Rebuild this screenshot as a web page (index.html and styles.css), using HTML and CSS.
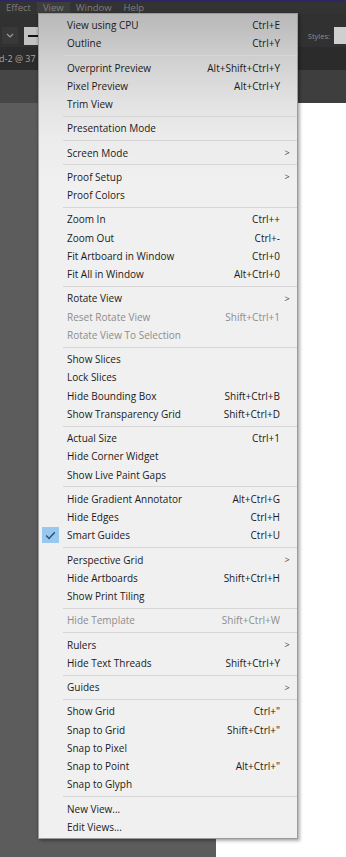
FILE: index.html
```html
<!DOCTYPE html>
<html>
<head>
<meta charset="utf-8">
<link rel="stylesheet" href="styles.css">
</head>
<body>
<div class="app">
  <div class="topline"></div>
  <div class="menubar">
    <span class="mb-item">Effect</span>
    <span class="mb-item active">View</span>
    <span class="mb-item">Window</span>
    <span class="mb-item">Help</span>
  </div>
  <div class="toolbar">
    <div class="tb-left">
      <span class="chev-box"><svg width="8" height="5" viewBox="0 0 8 5"><path d="M1 1l3 3 3-3" fill="none" stroke="#9a9a9a" stroke-width="1.2"/></svg></span>
      <span class="stroke-box"><span class="dash"></span></span>
    </div>
    <div class="tb-right">
      <span class="styles-label">Styles:</span>
      <span class="styles-box"></span>
    </div>
  </div>
  <div class="tabs"><span class="tab-text">d-2 @ 37</span></div>
  <div class="band"><div class="band-left"></div><div class="band-right"></div></div>
  <div class="workspace">
    <div class="pasteboard"></div>
    <div class="artboard"></div>
  </div>

  <div class="menu">
    <div class="row"><span class="lbl">View using CPU</span><span class="sc">Ctrl+E</span><span class="arr"></span></div>
    <div class="row"><span class="lbl">Outline</span><span class="sc">Ctrl+Y</span><span class="arr"></span></div>
    <div class="sep"></div>
    <div class="row"><span class="lbl">Overprint Preview</span><span class="sc">Alt+Shift+Ctrl+Y</span><span class="arr"></span></div>
    <div class="row"><span class="lbl">Pixel Preview</span><span class="sc">Alt+Ctrl+Y</span><span class="arr"></span></div>
    <div class="row"><span class="lbl">Trim View</span><span class="sc"></span><span class="arr"></span></div>
    <div class="sep"></div>
    <div class="row"><span class="lbl">Presentation Mode</span><span class="sc"></span><span class="arr"></span></div>
    <div class="sep"></div>
    <div class="row"><span class="lbl">Screen Mode</span><span class="sc"></span><span class="arr">&gt;</span></div>
    <div class="sep"></div>
    <div class="row"><span class="lbl">Proof Setup</span><span class="sc"></span><span class="arr">&gt;</span></div>
    <div class="row"><span class="lbl">Proof Colors</span><span class="sc"></span><span class="arr"></span></div>
    <div class="sep"></div>
    <div class="row"><span class="lbl">Zoom In</span><span class="sc">Ctrl++</span><span class="arr"></span></div>
    <div class="row"><span class="lbl">Zoom Out</span><span class="sc">Ctrl+-</span><span class="arr"></span></div>
    <div class="row"><span class="lbl">Fit Artboard in Window</span><span class="sc">Ctrl+0</span><span class="arr"></span></div>
    <div class="row"><span class="lbl">Fit All in Window</span><span class="sc">Alt+Ctrl+0</span><span class="arr"></span></div>
    <div class="sep"></div>
    <div class="row"><span class="lbl">Rotate View</span><span class="sc"></span><span class="arr">&gt;</span></div>
    <div class="row disabled"><span class="lbl">Reset Rotate View</span><span class="sc">Shift+Ctrl+1</span><span class="arr"></span></div>
    <div class="row disabled"><span class="lbl">Rotate View To Selection</span><span class="sc"></span><span class="arr"></span></div>
    <div class="sep"></div>
    <div class="row"><span class="lbl">Show Slices</span><span class="sc"></span><span class="arr"></span></div>
    <div class="row"><span class="lbl">Lock Slices</span><span class="sc"></span><span class="arr"></span></div>
    <div class="row"><span class="lbl">Hide Bounding Box</span><span class="sc">Shift+Ctrl+B</span><span class="arr"></span></div>
    <div class="row"><span class="lbl">Show Transparency Grid</span><span class="sc">Shift+Ctrl+D</span><span class="arr"></span></div>
    <div class="sep"></div>
    <div class="row"><span class="lbl">Actual Size</span><span class="sc">Ctrl+1</span><span class="arr"></span></div>
    <div class="row"><span class="lbl">Hide Corner Widget</span><span class="sc"></span><span class="arr"></span></div>
    <div class="row"><span class="lbl">Show Live Paint Gaps</span><span class="sc"></span><span class="arr"></span></div>
    <div class="sep"></div>
    <div class="row"><span class="lbl">Hide Gradient Annotator</span><span class="sc">Alt+Ctrl+G</span><span class="arr"></span></div>
    <div class="row"><span class="lbl">Hide Edges</span><span class="sc">Ctrl+H</span><span class="arr"></span></div>
    <div class="row checked"><span class="check"><svg width="11" height="9" viewBox="0 0 11 9"><path d="M1.2 4.6l2.8 2.9L9.8 1.2" fill="none" stroke="#2a4d73" stroke-width="1.4"/></svg></span><span class="lbl">Smart Guides</span><span class="sc">Ctrl+U</span><span class="arr"></span></div>
    <div class="sep"></div>
    <div class="row"><span class="lbl">Perspective Grid</span><span class="sc"></span><span class="arr">&gt;</span></div>
    <div class="row"><span class="lbl">Hide Artboards</span><span class="sc">Shift+Ctrl+H</span><span class="arr"></span></div>
    <div class="row"><span class="lbl">Show Print Tiling</span><span class="sc"></span><span class="arr"></span></div>
    <div class="sep"></div>
    <div class="row disabled"><span class="lbl">Hide Template</span><span class="sc">Shift+Ctrl+W</span><span class="arr"></span></div>
    <div class="sep"></div>
    <div class="row"><span class="lbl">Rulers</span><span class="sc"></span><span class="arr">&gt;</span></div>
    <div class="row"><span class="lbl">Hide Text Threads</span><span class="sc">Shift+Ctrl+Y</span><span class="arr"></span></div>
    <div class="sep"></div>
    <div class="row"><span class="lbl">Guides</span><span class="sc"></span><span class="arr">&gt;</span></div>
    <div class="sep"></div>
    <div class="row"><span class="lbl">Show Grid</span><span class="sc">Ctrl+"</span><span class="arr"></span></div>
    <div class="row"><span class="lbl">Snap to Grid</span><span class="sc">Shift+Ctrl+"</span><span class="arr"></span></div>
    <div class="row"><span class="lbl">Snap to Pixel</span><span class="sc"></span><span class="arr"></span></div>
    <div class="row"><span class="lbl">Snap to Point</span><span class="sc">Alt+Ctrl+"</span><span class="arr"></span></div>
    <div class="row"><span class="lbl">Snap to Glyph</span><span class="sc"></span><span class="arr"></span></div>
    <div class="sep"></div>
    <div class="row"><span class="lbl">New View...</span><span class="sc"></span><span class="arr"></span></div>
    <div class="row"><span class="lbl">Edit Views...</span><span class="sc"></span><span class="arr"></span></div>
  </div>
</div>
</body>
</html>
```

FILE: styles.css
```css
* { box-sizing: border-box; }
html, body { margin: 0; padding: 0; }
body { background: #5b5b5b; font-family: "Open Sans", "Noto Sans", "Liberation Sans", sans-serif; }
.app { position: relative; width: 346px; height: 857px; overflow: hidden; display: flex; flex-direction: column; background: #5b5b5b; }

.topline { height: 2px; background: #2d2762; flex: none; }
.menubar { height: 12px; background: #333333; display: flex; align-items: center; padding-left: 0; flex: none; }
.mb-item { font-size: 9.5px; color: #7f7f7f; line-height: 12px; padding: 0 6px; }
.mb-item.active { background: #3d3d3d; }

.toolbar { height: 33px; background: #313131; display: flex; justify-content: space-between; align-items: flex-start; padding-top: 13px; flex: none; }
.tb-left { display: flex; align-items: flex-start; gap: 6px; padding-left: 2px; }
.chev-box { width: 16px; height: 17px; background: #383838; display: flex; align-items: center; justify-content: center; }
.stroke-box { width: 14px; height: 18px; background: #c2c2c2; display: flex; align-items: center; justify-content: flex-end; }
.dash { width: 10px; height: 2px; background: #111; }
.tb-right { display: flex; align-items: center; gap: 4px; height: 17px; }
.styles-label { font-size: 7.5px; color: #8f8f8f; }
.styles-box { width: 12px; height: 17px; background: #cfcfcf; }

.tabs { height: 23px; background: #2b2b2b; display: flex; align-items: center; flex: none; }
.tab-text { font-size: 9px; color: #a4a4a4; margin-left: -1px; }

.band { height: 33px; display: flex; flex: none; }
.band-left { width: 216px; background: #464646; }
.band-right { flex: 1; background: #3e3e3e; }

.workspace { flex: 1; display: flex; }
.pasteboard { width: 216px; background: #5c5c5c; }
.artboard { flex: 1; background: #ffffff; }

.menu {
  position: absolute; left: 38px; top: 13px; width: 260px; height: 826px;
  padding: 2px 0 3px 0;
  border: 1px solid #9a9a9a;
  background: linear-gradient(to bottom, #b8b8b8 0px, #d2d2d2 50px, #e3e3e3 90px, #ececec 125px, #f0f0f0 170px, #f0f0f0 100%);
  box-shadow: 2px 2px 3px rgba(0,0,0,0.3), -1px 0 2px rgba(0,0,0,0.15);
}
.row {
  position: relative; height: 18.25px; display: flex; align-items: center;
  padding-left: 28px; padding-right: 3px;
  font-size: 10px; color: #1a1a1a; white-space: nowrap;
}
.lbl { flex: 1; }
.sc { text-align: right; }
.arr { width: 14px; text-align: center; font-size: 9px; color: #444; }
.row.disabled { color: #8d8d8d; }
.check {
  position: absolute; left: 3px; top: 1px; width: 17px; height: 16px;
  background: #99c8ee; display: flex; align-items: center; justify-content: center;
}
.sep { height: 6px; margin-left: 24px; display: flex; align-items: center; }
.sep::before { content: ""; display: block; width: 100%; height: 1px; background: #d6d6d6; }
```
